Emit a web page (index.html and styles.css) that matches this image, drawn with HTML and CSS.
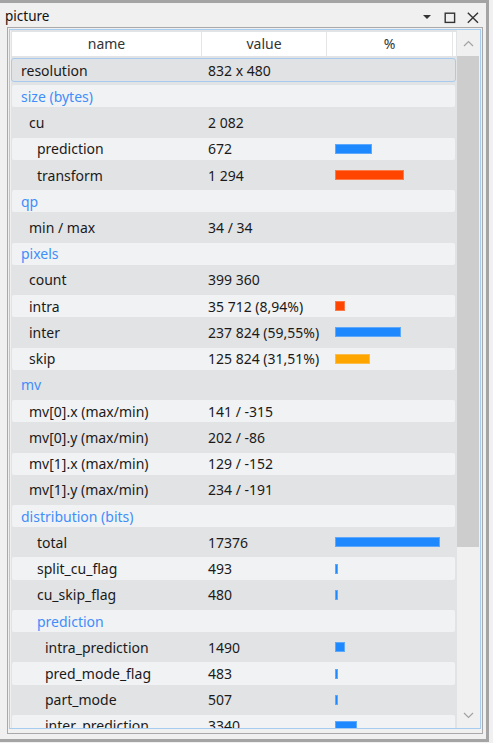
FILE: index.html
```html
<!DOCTYPE html>
<html lang="en">
  <head>
    <meta charset="UTF-8" />
    <title>picture</title>
    <link rel="stylesheet" href="styles.css">
  </head>
  <body>
    <div class="window">
      <div class="titlebar">
        <span class="title">picture</span>
        <div class="controls">
          <span class="ctl">
            <svg width="12" height="12" viewBox="0 0 12 12"><polygon points="2,3 10,3 6,7" fill="#333" /></svg>
          </span>
          <span class="ctl">
            <svg width="12" height="12" viewBox="0 0 12 12"><rect x="1.2" y="1.2" width="9.4" height="9.2" fill="none" stroke="#333" stroke-width="1.4" /></svg>
          </span>
          <span class="ctl">
            <svg width="12" height="12" viewBox="0 0 12 12"><path d="M0.8 0.8 L11 10.8 M11 0.8 L0.8 10.8" stroke="#333" stroke-width="1.4" /></svg>
          </span>
        </div>
      </div>

      <div class="panel">
        <div class="frame">
          <div class="view">
            <div class="table">
              <div class="thead">
                <div class="th th-name">name</div>
                <div class="th th-value">value</div>
                <div class="th th-pct">%</div>
              </div>

              <div class="row selected">
                <div class="cell name lv0">resolution</div>
                <div class="cell value">832 x 480</div>
                <div class="cell pct"></div>
              </div>
              <div class="row alt">
                <div class="cell name lv0 section">size (bytes)</div>
                <div class="cell value"></div>
                <div class="cell pct"></div>
              </div>
              <div class="row">
                <div class="cell name lv1">cu</div>
                <div class="cell value">2 082</div>
                <div class="cell pct"></div>
              </div>
              <div class="row alt">
                <div class="cell name lv2">prediction</div>
                <div class="cell value">672</div>
                <div class="cell pct"><span class="bar blue" style="width: 37px"></span></div>
              </div>
              <div class="row">
                <div class="cell name lv2">transform</div>
                <div class="cell value">1 294</div>
                <div class="cell pct"><span class="bar red" style="width: 69px"></span></div>
              </div>
              <div class="row alt">
                <div class="cell name lv0 section">qp</div>
                <div class="cell value"></div>
                <div class="cell pct"></div>
              </div>
              <div class="row">
                <div class="cell name lv1">min / max</div>
                <div class="cell value">34 / 34</div>
                <div class="cell pct"></div>
              </div>
              <div class="row alt">
                <div class="cell name lv0 section">pixels</div>
                <div class="cell value"></div>
                <div class="cell pct"></div>
              </div>
              <div class="row">
                <div class="cell name lv1">count</div>
                <div class="cell value">399 360</div>
                <div class="cell pct"></div>
              </div>
              <div class="row alt">
                <div class="cell name lv1">intra</div>
                <div class="cell value">35 712 (8,94%)</div>
                <div class="cell pct"><span class="bar red" style="width: 10px"></span></div>
              </div>
              <div class="row">
                <div class="cell name lv1">inter</div>
                <div class="cell value">237 824 (59,55%)</div>
                <div class="cell pct"><span class="bar blue" style="width: 66px"></span></div>
              </div>
              <div class="row alt">
                <div class="cell name lv1">skip</div>
                <div class="cell value">125 824 (31,51%)</div>
                <div class="cell pct"><span class="bar orange" style="width: 35px"></span></div>
              </div>
              <div class="row">
                <div class="cell name lv0 section">mv</div>
                <div class="cell value"></div>
                <div class="cell pct"></div>
              </div>
              <div class="row alt">
                <div class="cell name lv1">mv[0].x (max/min)</div>
                <div class="cell value">141 / -315</div>
                <div class="cell pct"></div>
              </div>
              <div class="row">
                <div class="cell name lv1">mv[0].y (max/min)</div>
                <div class="cell value">202 / -86</div>
                <div class="cell pct"></div>
              </div>
              <div class="row alt">
                <div class="cell name lv1">mv[1].x (max/min)</div>
                <div class="cell value">129 / -152</div>
                <div class="cell pct"></div>
              </div>
              <div class="row">
                <div class="cell name lv1">mv[1].y (max/min)</div>
                <div class="cell value">234 / -191</div>
                <div class="cell pct"></div>
              </div>
              <div class="row alt">
                <div class="cell name lv0 section">distribution (bits)</div>
                <div class="cell value"></div>
                <div class="cell pct"></div>
              </div>
              <div class="row">
                <div class="cell name lv2">total</div>
                <div class="cell value">17376</div>
                <div class="cell pct"><span class="bar blue" style="width: 105px"></span></div>
              </div>
              <div class="row alt">
                <div class="cell name lv2">split_cu_flag</div>
                <div class="cell value">493</div>
                <div class="cell pct"><span class="bar blue" style="width: 3px"></span></div>
              </div>
              <div class="row">
                <div class="cell name lv2">cu_skip_flag</div>
                <div class="cell value">480</div>
                <div class="cell pct"><span class="bar blue" style="width: 3px"></span></div>
              </div>
              <div class="row alt">
                <div class="cell name lv2 section">prediction</div>
                <div class="cell value"></div>
                <div class="cell pct"></div>
              </div>
              <div class="row">
                <div class="cell name lv3">intra_prediction</div>
                <div class="cell value">1490</div>
                <div class="cell pct"><span class="bar blue" style="width: 10px"></span></div>
              </div>
              <div class="row alt">
                <div class="cell name lv3">pred_mode_flag</div>
                <div class="cell value">483</div>
                <div class="cell pct"><span class="bar blue" style="width: 3px"></span></div>
              </div>
              <div class="row">
                <div class="cell name lv3">part_mode</div>
                <div class="cell value">507</div>
                <div class="cell pct"><span class="bar blue" style="width: 3px"></span></div>
              </div>
              <div class="row alt">
                <div class="cell name lv3">inter_prediction</div>
                <div class="cell value">3340</div>
                <div class="cell pct"><span class="bar blue" style="width: 22px"></span></div>
              </div>
            </div>

            <div class="scrollbar">
              <div class="sb-btn">
                <svg width="11" height="7" viewBox="0 0 11 7"><polyline points="1,6 5.5,1.5 10,6" fill="none" stroke="#a2a2a2" stroke-width="1.2" /></svg>
              </div>
              <div class="sb-thumb"></div>
              <div class="sb-track"></div>
              <div class="sb-btn">
                <svg width="11" height="7" viewBox="0 0 11 7"><polyline points="1,1 5.5,5.5 10,1" fill="none" stroke="#a2a2a2" stroke-width="1.2" /></svg>
              </div>
            </div>
          </div>
        </div>
      </div>
    </div>
  </body>
</html>
```

FILE: styles.css
```css
body {
  margin: 0;
  background-color: #f0f0f0;
  font-family: "Noto Sans", "Open Sans", sans-serif;
  font-size: 14px;
  color: #1a1a1a;
}

.window {
  box-sizing: border-box;
  width: 489px;
  height: 742px;
  margin-left: 0;
  padding-left: 2px;
  border-top: 3px solid #a4a4a4;
  border-right: 3px solid #a4a4a4;
  border-bottom: 3px solid #a4a4a4;
  background-color: #f0f0f0;
}

.titlebar {
  display: flex;
  justify-content: space-between;
  height: 24px;
  padding-left: 3px;
  padding-right: 2px;
}

.title {
  font-size: 13.5px;
  line-height: 22px;
  padding-top: 2px;
  color: #111;
}

.controls {
  display: flex;
}

.ctl {
  display: flex;
  justify-content: center;
  width: 23px;
  padding-top: 9px;
}

/* dock contents */
.panel {
  width: 476px;
  box-sizing: border-box;
  margin-left: 5px;
  border: 1px solid #a9a9a9;
  padding: 1px 1px 4px 1px;
}

.frame {
  border: 1px solid #a6cdef;
  height: 698px;
}

.view {
  display: flex;
  height: 698px;
  overflow: hidden;
  padding-left: 1px;
}

.table {
  display: flex;
  flex-direction: column;
  width: 446px;
  padding-top: 1px;
  background-color: #e2e3e5;
}

.thead {
  display: flex;
  flex-shrink: 0;
  height: 24px;
  margin: 1px 1px 1px 1px;
  background-color: #fff;
  color: #333;
}

.th {
  box-sizing: border-box;
  line-height: 24px;
  text-align: center;
  border-right: 1px solid #e6e6e6;
}

.th-name {
  width: 190px;
}

.th-value {
  width: 125px;
}

.th-pct {
  width: 126px;
}

.row {
  display: flex;
  flex-shrink: 0;
  align-items: center;
  height: 22.24px;
  margin: 2px 2px 2px 1px;
  border-radius: 2px;
  white-space: nowrap;
}

.row.alt {
  background-color: #f1f2f4;
}

.row.selected {
  margin: 1px 1px 1px 0;
  border: 1px solid #a8caee;
  border-radius: 3px;
  background-color: #e1e2e4;
}

.cell {
  box-sizing: border-box;
  overflow: hidden;
}

.cell.name {
  width: 189px;
}

.cell.value {
  width: 125px;
  padding-left: 7px;
  padding-right: 10px;
}

.cell.pct {
  display: flex;
  align-items: center;
  flex: 1;
  padding-left: 9px;
}

.lv0 { padding-left: 9px; }
.lv1 { padding-left: 17px; }
.lv2 { padding-left: 25px; }
.lv3 { padding-left: 33px; }

.section {
  color: #3f8efa;
}

.bar {
  display: block;
  height: 10px;
  box-sizing: border-box;
}

.bar.blue {
  background-color: #1e88ff;
  border: 1px solid #5ea9fb;
}

.bar.red {
  background-color: #ff4500;
  border: 1px solid #fb7a48;
}

.bar.orange {
  background-color: #ffa500;
  border: 1px solid #fbbd4e;
}

/* scroll bar */
.scrollbar {
  display: flex;
  flex-direction: column;
  width: 22px;
  padding-top: 1px;
  background-color: #f0f0f0;
}

.sb-btn {
  display: flex;
  align-items: center;
  justify-content: center;
  height: 25px;
  flex-shrink: 0;
}

.sb-thumb {
  height: 491px;
  background-color: #cdcdcd;
  flex-shrink: 0;
}

.sb-track {
  flex: 1;
}
```
